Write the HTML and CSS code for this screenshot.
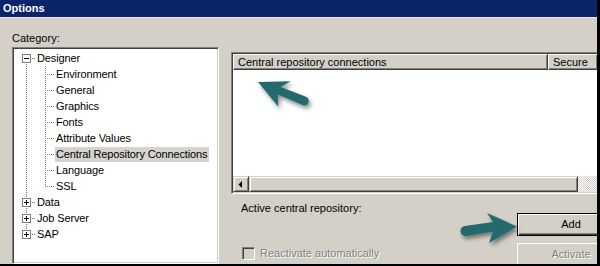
FILE: index.html
```html
<!DOCTYPE html>
<html>
<head>
<meta charset="utf-8">
<link rel="stylesheet" href="styles.css">
</head>
<body>
<div class="frame">
  <div class="titlebar">Options</div>
  <div class="content">
    <div class="left">
      <div class="caption">Category:</div>
      <div class="tree">
        <div class="row root first">
          <span class="g0"><svg class="box" width="9" height="9" viewBox="0 0 9 9"><rect x="0.5" y="0.5" width="8" height="8" fill="#fff" stroke="#808080"/><path d="M2 4.5h5" stroke="#000"/></svg></span>
          <span class="label">Designer</span>
        </div>
        <div class="row child"><span class="g0"></span><span class="g1"></span><span class="label">Environment</span></div>
        <div class="row child"><span class="g0"></span><span class="g1"></span><span class="label">General</span></div>
        <div class="row child"><span class="g0"></span><span class="g1"></span><span class="label">Graphics</span></div>
        <div class="row child"><span class="g0"></span><span class="g1"></span><span class="label">Fonts</span></div>
        <div class="row child"><span class="g0"></span><span class="g1"></span><span class="label">Attribute Values</span></div>
        <div class="row child"><span class="g0"></span><span class="g1"></span><span class="label selected">Central Repository Connections</span></div>
        <div class="row child"><span class="g0"></span><span class="g1"></span><span class="label">Language</span></div>
        <div class="row child lastchild"><span class="g0"></span><span class="g1"></span><span class="label">SSL</span></div>
        <div class="row root">
          <span class="g0"><svg class="box" width="9" height="9" viewBox="0 0 9 9"><rect x="0.5" y="0.5" width="8" height="8" fill="#fff" stroke="#808080"/><path d="M2 4.5h5M4.5 2v5" stroke="#000"/></svg></span>
          <span class="label">Data</span>
        </div>
        <div class="row root">
          <span class="g0"><svg class="box" width="9" height="9" viewBox="0 0 9 9"><rect x="0.5" y="0.5" width="8" height="8" fill="#fff" stroke="#808080"/><path d="M2 4.5h5M4.5 2v5" stroke="#000"/></svg></span>
          <span class="label">Job Server</span>
        </div>
        <div class="row root last">
          <span class="g0"><svg class="box" width="9" height="9" viewBox="0 0 9 9"><rect x="0.5" y="0.5" width="8" height="8" fill="#fff" stroke="#808080"/><path d="M2 4.5h5M4.5 2v5" stroke="#000"/></svg></span>
          <span class="label">SAP</span>
        </div>
      </div>
    </div>
    <div class="right">
      <div class="list">
        <div class="header">
          <div class="hcell c1">Central repository connections</div>
          <div class="hcell c2">Secure</div>
        </div>
        <div class="listbody"></div>
        <div class="hscroll">
          <div class="sbtn"><svg width="4" height="7" viewBox="0 0 4 7"><path d="M4 0v7L0.5 3.5z" fill="#000"/></svg></div>
          <div class="thumb"></div>
          <div class="track"></div>
        </div>
      </div>
      <div class="below">
        <div class="bleft">
          <div class="active-label">Active central repository:</div>
          <div class="check-row">
            <span class="checkbox"></span>
            <span class="check-text">Reactivate automatically</span>
          </div>
        </div>
        <div class="bright">
          <div class="btn default">Add</div>
          <div class="btn disabled">Activate</div>
        </div>
      </div>
    </div>
  </div>
  <svg class="arrows" width="600" height="266" viewBox="0 0 600 266">
    <defs>
      <filter id="sh" x="-30%" y="-30%" width="160%" height="160%">
        <feDropShadow dx="2" dy="3" stdDeviation="2" flood-color="#000" flood-opacity="0.45"/>
      </filter>
    </defs>
    <path filter="url(#sh)" fill="#216a6e" d="M258 82 L290.7 81.3 L280.8 87 L306 96.7 A4.5 4.5 0 0 1 302.6 105.1 L277.8 94.4 L278.2 106.5 Z"/>
    <path filter="url(#sh)" fill="#216a6e" d="M517 226.5 L489 243 L493 231.5 L466 236 A5 5 0 0 1 465 226 L493 222 L487 213 Z"/>
  </svg>
</div>
</body>
</html>
```

FILE: styles.css
```css
html, body {
  margin: 0;
  padding: 0;
  background: #fff;
}

.frame {
  position: relative;
  width: 600px;
  height: 266px;
  box-sizing: border-box;
  border-right: 3px solid #000;
  border-bottom: 2px solid #000;
  background: #d4d0c8;
  overflow: hidden;
  font-family: "Liberation Sans", Arial, sans-serif;
  font-size: 11px;
  color: #000;
}

.titlebar {
  height: 17px;
  line-height: 17px;
  background: #0a246a;
  color: #fff;
  font-weight: bold;
  padding-left: 3px;
  border-bottom: 1px solid #e8e6e0;
}

.content {
  display: flex;
  height: 246px;
}

.left {
  display: flex;
  flex-direction: column;
  margin-left: 12px;
  width: 207px;
  flex: none;
}

.caption {
  padding-top: 14px;
  line-height: 13px;
}

.tree {
  flex: 1;
  margin-top: 2px;
  background: #fff;
  border: 1px solid;
  border-color: #808080 #fff #fff #808080;
  box-shadow: inset 1px 1px 0 #404040, inset -1px -1px 0 #d4d0c8;
  padding: 2px 0 0 4px;
}

.row {
  display: flex;
  align-items: center;
  height: 16px;
}

.g0, .g1 {
  display: flex;
  align-items: center;
  height: 16px;
  flex: none;
  background-repeat: no-repeat;
}

.g0 {
  width: 18px;
}

.g1 {
  width: 19px;
}

.box {
  display: block;
  margin-left: 5px;
}

.row.root .g0 {
  background-image:
    repeating-linear-gradient(#808080 0 1px, transparent 1px 2px),
    repeating-linear-gradient(to right, #808080 0 1px, transparent 1px 2px);
  background-size: 1px 16px, 9px 1px;
  background-position: 9px 0, 9px 8px;
}

.row.root.first .g0 {
  background-size: 1px 8px, 9px 1px;
  background-position: 9px 8px, 9px 8px;
}

.row.root.last .g0 {
  background-size: 1px 9px, 9px 1px;
  background-position: 9px 0, 9px 8px;
}

.row.child .g0 {
  background-image: repeating-linear-gradient(#808080 0 1px, transparent 1px 2px);
  background-size: 1px 16px;
  background-position: 9px 0;
}

.row.child .g1 {
  background-image:
    repeating-linear-gradient(#808080 0 1px, transparent 1px 2px),
    repeating-linear-gradient(to right, #808080 0 1px, transparent 1px 2px);
  background-size: 1px 16px, 9px 1px;
  background-position: 10px 0, 10px 8px;
}

.row.child.lastchild .g1 {
  background-size: 1px 9px, 9px 1px;
}

.label {
  margin-left: 1px;
  padding: 0 2px 0 1px;
  line-height: 15px;
  height: 15px;
  white-space: nowrap;
  letter-spacing: -0.13px;
}

.label.selected {
  background: #d6d3ce;
}

.right {
  margin-left: 12px;
  width: 400px;
  flex: none;
}

.list {
  margin-top: 34px;
  width: 369px;
  height: 142px;
  box-sizing: border-box;
  border: 1px solid;
  border-color: #808080 #fff #fff #808080;
  box-shadow: inset 1px 1px 0 #404040, inset -1px -1px 0 #d4d0c8;
  padding: 1px;
  display: flex;
  flex-direction: column;
  background: #fff;
}

.header {
  display: flex;
  height: 16px;
  flex: none;
}

.hcell {
  box-sizing: border-box;
  height: 16px;
  line-height: 14px;
  padding-left: 4px;
  background: #d4d0c8;
  border-top: 1px solid #fff;
  border-left: 1px solid #fff;
  border-bottom: 1px solid #404040;
  border-right: 1px solid #404040;
  box-shadow: inset -1px -1px 0 #808080;
  white-space: nowrap;
}

.hcell.c1 {
  width: 315px;
}

.hcell.c2 {
  flex: 1;
}

.listbody {
  flex: 1;
  background: #fff;
}

.hscroll {
  display: flex;
  height: 16px;
  flex: none;
}

.sbtn, .thumb {
  box-sizing: border-box;
  height: 16px;
  background: #d4d0c8;
  border: 1px solid;
  border-color: #d4d0c8 #404040 #404040 #d4d0c8;
  box-shadow: inset 1px 1px 0 #fff, inset -1px -1px 0 #808080;
}

.sbtn {
  width: 16px;
  display: flex;
  align-items: center;
  justify-content: center;
  padding-right: 2px;
}

.sbtn svg {
  display: block;
}

.thumb {
  width: 329px;
}

.track {
  flex: 1;
  background: repeating-conic-gradient(#fff 0 25%, #d4d0c8 0 50%) 0 0 / 2px 2px;
}

.below {
  display: flex;
}

.bleft {
  width: 286px;
  flex: none;
  padding-left: 10px;
  box-sizing: border-box;
}

.active-label {
  margin-top: 8px;
  line-height: 13px;
}

.check-row {
  display: flex;
  align-items: center;
  margin-top: 32px;
  height: 13px;
  margin-left: 1px;
}

.checkbox {
  width: 13px;
  height: 13px;
  box-sizing: border-box;
  border: 1px solid;
  border-color: #808080 #fff #fff #808080;
  box-shadow: inset 1px 1px 0 #404040, inset -1px -1px 0 #d4d0c8;
  background: #d4d0c8;
  flex: none;
}

.check-text {
  margin-left: 5px;
  color: #808080;
  text-shadow: 1px 1px 0 #fff;
  line-height: 13px;
}

.bright {
  display: flex;
  flex-direction: column;
  padding-top: 19px;
}

.btn {
  width: 108px;
  height: 23px;
  box-sizing: border-box;
  line-height: 21px;
  text-align: center;
  background: #d4d0c8;
  border: 1px solid;
  border-color: #fff #404040 #404040 #fff;
  box-shadow: inset -1px -1px 0 #808080;
}

.btn.default {
  border-color: #000;
  box-shadow: inset 1px 1px 0 #fff, inset -1px -1px 0 #404040, inset -2px -2px 0 #808080;
}

.btn.disabled {
  margin-top: 7px;
  color: #808080;
  text-shadow: 1px 1px 0 #fff;
}

.arrows {
  position: absolute;
  left: 0;
  top: 0;
  pointer-events: none;
}
```
